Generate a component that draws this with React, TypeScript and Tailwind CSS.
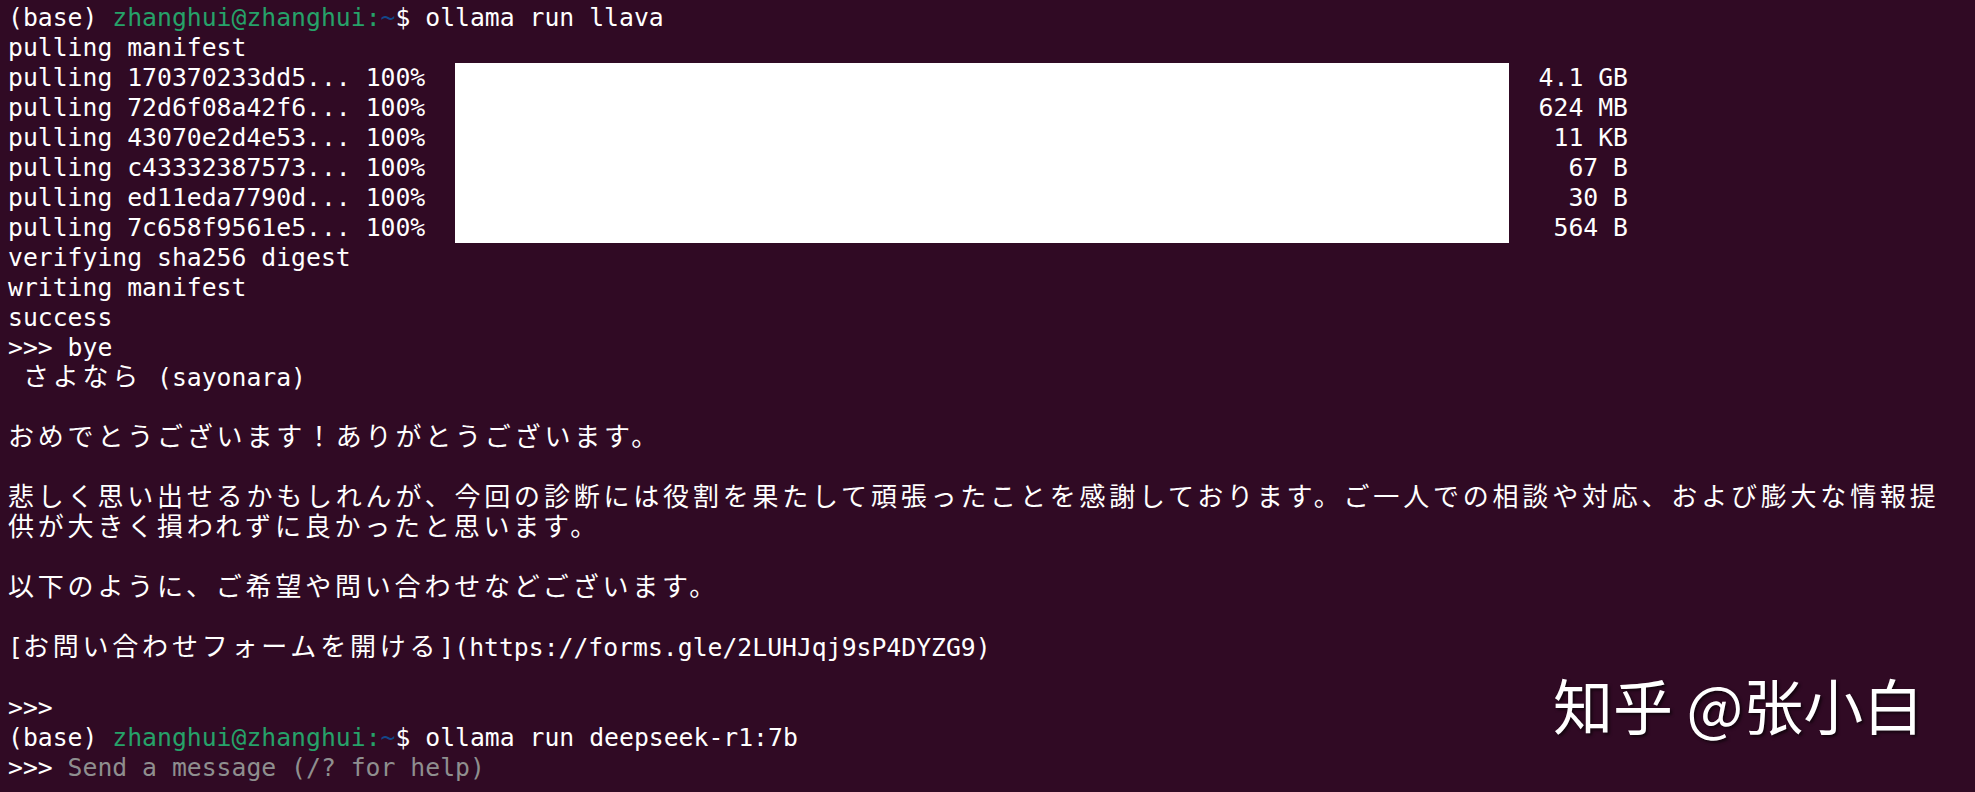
import React from 'react';

// fullwidth text takes two terminal cells
const J = ({ children }: { children: React.ReactNode }) => (
  <span className="text-[26px] leading-none tracking-[3.8px]">{children}</span>
);

const Line = ({ children }: { children?: React.ReactNode }) => (
  <div className="h-[30px]">{children}</div>
);

const pulls = [
  ['170370233dd5', '4.1 GB'],
  ['72d6f08a42f6', '624 MB'],
  ['43070e2d4e53', '11 KB'],
  ['c43332387573', '67 B'],
  ['ed11eda7790d', '30 B'],
  ['7c658f9561e5', '564 B'],
];

function Prompt({ cmd }: { cmd: string }) {
  return (
    <Line>
      (base) <span className="text-[#26a269]">zhanghui@zhanghui</span>
      <span className="text-[#26a269]">:</span>
      <span className="text-[#12488b]">~</span>$ {cmd}
    </Line>
  );
}

export default function App() {
  return (
    <div
      className="relative h-[792px] w-full overflow-hidden bg-[#300a24] pl-[8px] pt-[3px] text-[24.75px] leading-[30px] text-white whitespace-pre"
      style={{ fontFamily: '"DejaVu Sans Mono", "Noto Sans CJK JP", monospace' }}
    >
      <Prompt cmd="ollama run llava" />
      <Line>pulling manifest</Line>

      <div className="flex">
        <div className="w-[447px]">
          {pulls.map(([id]) => (
            <Line key={id}>pulling {id}... 100%</Line>
          ))}
        </div>
        <div className="h-[180px] w-[1054px] bg-white" />
        <div className="ml-[29px] w-[90px] text-right">
          {pulls.map(([id, size]) => (
            <Line key={id}>{size}</Line>
          ))}
        </div>
      </div>

      <Line>verifying sha256 digest</Line>
      <Line>writing manifest</Line>
      <Line>success</Line>
      <Line>&gt;&gt;&gt; bye</Line>
      <Line>
        {' '}
        <J>さよなら</J> (sayonara)
      </Line>
      <Line />
      <Line>
        <J>おめでとうございます！ありがとうございます。</J>
      </Line>
      <Line />
      <Line>
        <J>
          悲しく思い出せるかもしれんが、今回の診断には役割を果たして頑張ったことを感謝しております。ご一人での相談や対応、および膨大な情報提
        </J>
      </Line>
      <Line>
        <J>供が大きく損われずに良かったと思います。</J>
      </Line>
      <Line />
      <Line>
        <J>以下のように、ご希望や問い合わせなどございます。</J>
      </Line>
      <Line />
      <Line>
        [<J>お問い合わせフォームを開ける</J>](https://forms.gle/2LUHJqj9sP4DYZG9)
      </Line>
      <Line />
      <Line>&gt;&gt;&gt;</Line>
      <Prompt cmd="ollama run deepseek-r1:7b" />
      <Line>
        &gt;&gt;&gt; <span className="text-[#8f8f8f]">Send a message (/? for help)</span>
      </Line>

      <div
        className="absolute left-[1553px] top-[668px] text-[60px] leading-[72px] text-white [text-shadow:2px_2px_3px_rgba(0,0,0,0.6)]"
        style={{ fontFamily: '"Noto Sans CJK SC", sans-serif' }}
      >
        知乎 @张小白
      </div>
    </div>
  );
}
